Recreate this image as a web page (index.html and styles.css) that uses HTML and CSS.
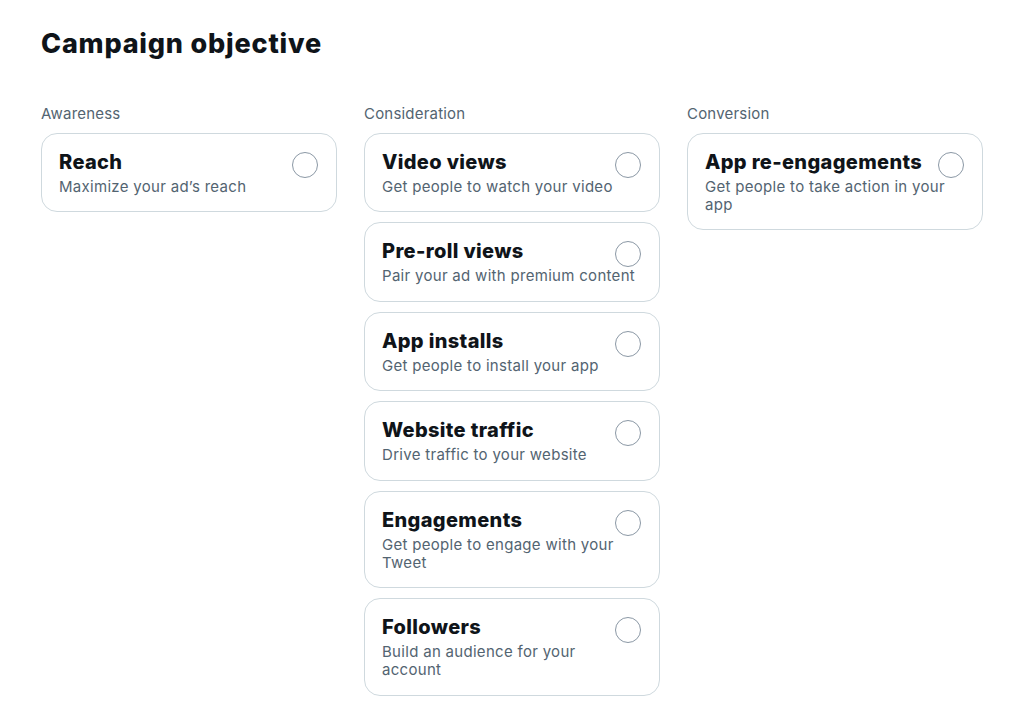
FILE: index.html
```html
<!DOCTYPE html>
<html>
<head>
<meta charset="utf-8">
<link rel="stylesheet" href="styles.css">
</head>
<body>
<div class="page">
  <h1 class="title">Campaign objective</h1>
  <div class="columns">
    <div class="column">
      <div class="group-label">Awareness</div>
      <div class="card">
        <div class="card-head">
          <div class="card-title">Reach</div>
          <span class="radio"></span>
        </div>
        <div class="card-desc">Maximize your ad’s reach</div>
      </div>
    </div>
    <div class="column">
      <div class="group-label">Consideration</div>
      <div class="card">
        <div class="card-head">
          <div class="card-title">Video views</div>
          <span class="radio"></span>
        </div>
        <div class="card-desc">Get people to watch your video</div>
      </div>
      <div class="card">
        <div class="card-head">
          <div class="card-title">Pre-roll views</div>
          <span class="radio"></span>
        </div>
        <div class="card-desc">Pair your ad with premium content</div>
      </div>
      <div class="card">
        <div class="card-head">
          <div class="card-title">App installs</div>
          <span class="radio"></span>
        </div>
        <div class="card-desc">Get people to install your app</div>
      </div>
      <div class="card">
        <div class="card-head">
          <div class="card-title">Website traffic</div>
          <span class="radio"></span>
        </div>
        <div class="card-desc">Drive traffic to your website</div>
      </div>
      <div class="card">
        <div class="card-head">
          <div class="card-title">Engagements</div>
          <span class="radio"></span>
        </div>
        <div class="card-desc">Get people to engage with your Tweet</div>
      </div>
      <div class="card">
        <div class="card-head">
          <div class="card-title">Followers</div>
          <span class="radio"></span>
        </div>
        <div class="card-desc">Build an audience for your account</div>
      </div>
    </div>
    <div class="column">
      <div class="group-label">Conversion</div>
      <div class="card">
        <div class="card-head">
          <div class="card-title">App re-engagements</div>
          <span class="radio"></span>
        </div>
        <div class="card-desc">Get people to take action in your app</div>
      </div>
    </div>
  </div>
</div>
</body>
</html>
```

FILE: styles.css
```css
html, body {
  margin: 0;
  padding: 0;
  background: #ffffff;
}
body {
  font-family: "Inter", "Roboto", "Liberation Sans", sans-serif;
  color: #0f1419;
}
.page {
  padding: 27px 0 0 41px;
}
.title {
  margin: 0;
  font-size: 27px;
  line-height: 34px;
  font-weight: 800;
  letter-spacing: 0.8px;
}
.columns {
  display: flex;
  gap: 27px;
  margin-top: 43px;
}
.column {
  width: 296px;
  display: flex;
  flex-direction: column;
  gap: 9.7px;
}
.group-label {
  font-size: 15px;
  line-height: 20px;
  color: #536471;
  letter-spacing: 0.2px;
  margin-bottom: -1px;
}
.card {
  border: 1px solid #cfd9de;
  border-radius: 16px;
  padding: 15px 18px 15.8px 17px;
}
.card-head {
  display: flex;
  align-items: flex-start;
  justify-content: space-between;
}
.card-title {
  font-size: 20px;
  line-height: 26px;
  font-weight: 800;
  letter-spacing: 0.35px;
  white-space: nowrap;
}
.card-desc {
  margin-top: 3px;
  padding-right: 4px;
  font-size: 15px;
  line-height: 18px;
  color: #536471;
  letter-spacing: 0.3px;
}
.radio {
  flex: none;
  width: 24px;
  height: 24px;
  border: 1px solid #8b98a5;
  border-radius: 50%;
  margin-top: 3px;
  margin-bottom: -3px;
}
```
